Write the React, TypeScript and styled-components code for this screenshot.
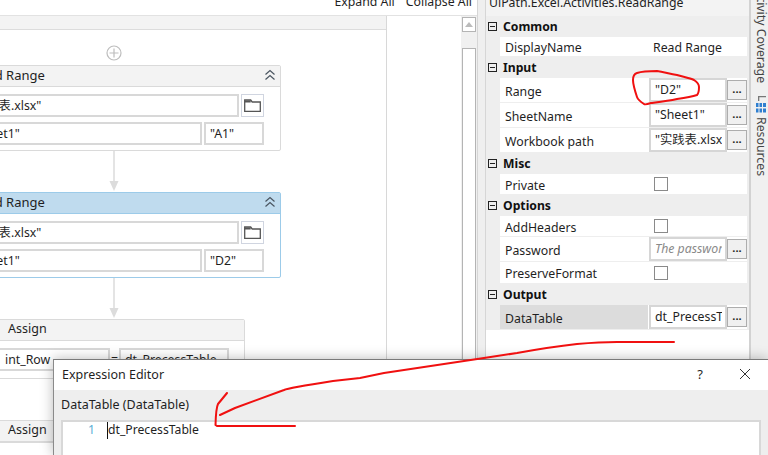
import React from "react";
import styled, { createGlobalStyle } from "styled-components";

const GlobalStyle = createGlobalStyle`
  html, body {
    margin: 0;
    padding: 0;
    background: #fff;
  }
  * {
    box-sizing: border-box;
  }
`;

type Prop = {
  name: string;
  kind: "plain" | "input" | "check";
  height: number;
  value?: string;
  hint?: boolean;
  selected?: boolean;
};

const GROUPS: Array<{ name: string; rows: Prop[] }> = [
  { name: "Common", rows: [{ name: "DisplayName", kind: "plain", height: 20, value: "Read Range" }] },
  {
    name: "Input",
    rows: [
      { name: "Range", kind: "input", height: 25, value: '"D2"' },
      { name: "SheetName", kind: "input", height: 25, value: '"Sheet1"' },
      { name: "Workbook path", kind: "input", height: 25, value: '"实践表.xlsx"' },
    ],
  },
  { name: "Misc", rows: [{ name: "Private", kind: "check", height: 21 }] },
  {
    name: "Options",
    rows: [
      { name: "AddHeaders", kind: "check", height: 21 },
      { name: "Password", kind: "input", height: 25, value: "The password", hint: true },
      { name: "PreserveFormat", kind: "check", height: 22 },
    ],
  },
  {
    name: "Output",
    rows: [{ name: "DataTable", kind: "input", height: 25, value: "dt_PrecessTable", selected: true }],
  },
];

const ReadRangeCard = ({ active, range }: { active?: boolean; range: string }) => (
  <Card $active={active} $width={334}>
    <CardHeader $active={active} $pad={24} $size={13}>
      <span>Read Range</span>
      <svg width="12" height="12" viewBox="0 0 12 12" fill="none" stroke="#4a5560" strokeWidth="1.2">
        <path d="M1.5 5.5 6 1.5l4.500 4M1.500 10.500 6 6.500l4.500 4" />
      </svg>
    </CardHeader>
    <CardBody>
      <FieldRow>
        <Field $grow $pad={14}>"实践表.xlsx"</Field>
        <FolderButton>
          <svg width="17" height="13" viewBox="0 0 17 13" fill="none" stroke="#555" strokeWidth="1.300">
            <path d="M.7 12.300V1h6l1.500 2h8.100v9.300z" />
            <path d="M.7 2.500h6" strokeWidth="2" />
          </svg>
        </FolderButton>
      </FieldRow>
      <FieldRow>
        <Field $grow $pad={15}>"Sheet1"</Field>
        <Field $width={60} $pad={4}>{range}</Field>
      </FieldRow>
    </CardBody>
  </Card>
);

const Connector = () => (
  <Arrow>
    <svg width="10" height="41" viewBox="0 0 10 41" fill="#e4e4e4">
      <rect x="4" y="0" width="2" height="32" />
      <path d="M0.500 30h9L5 40z" fill="#dcdcdc" />
    </svg>
  </Arrow>
);

const PropertyRow = ({ row }: { row: Prop }) => (
  <Row $height={row.height}>
    <RowLabel $selected={row.selected}>{row.name}</RowLabel>
    <RowValue>
      {row.kind === "plain" && <PlainValue>{row.value}</PlainValue>}
      {row.kind === "check" && <Check />}
      {row.kind === "input" && (
        <>
          <ValueInput $hint={row.hint}>
            <ValueText>{row.value}</ValueText>
          </ValueInput>
          <DotsButton>...</DotsButton>
        </>
      )}
    </RowValue>
  </Row>
);

export default function App() {
  return (
    <Page>
      <GlobalStyle />
      <Designer>
        <Toolbar>
          <ToolLink>Expand All</ToolLink>
          <ToolLink>Collapse All</ToolLink>
        </Toolbar>
        <DesignerBody>
          <CanvasPane>
            <Breadcrumb />
            <Canvas>
              <svg width="16" height="16" viewBox="0 0 16 16" fill="none" stroke="#bdbdbd" strokeWidth="1.200">
                <circle cx="8" cy="8" r="7" />
                <path d="M8 3.500v9M3.500 8h9" />
              </svg>
              <Gap />
              <ReadRangeCard range={'"A1"'} />
              <Connector />
              <ReadRangeCard active range={'"D2"'} />
              <Connector />
              <Card $width={262}>
                <CardHeader $pad={24} $size={12.5}>
                  <span>Assign</span>
                </CardHeader>
                <AssignRow>
                  <Field $width={125} $pad={18}>int_Row</Field>
                  <Equals>=</Equals>
                  <Field $width={110} $pad={4}>dt_PrecessTable</Field>
                </AssignRow>
              </Card>
              <SecondGap />
              <Card $width={262}>
                <CardHeader $pad={24} $size={12.5}>
                  <span>Assign</span>
                </CardHeader>
              </Card>
            </Canvas>
          </CanvasPane>
          <BlankPane />
          <ScrollBar>
            <ScrollUp>
              <svg width="8" height="5" viewBox="0 0 8 5" fill="#bbb">
                <path d="M4 0l4 5H0z" />
              </svg>
            </ScrollUp>
            <ScrollThumb />
          </ScrollBar>
        </DesignerBody>
      </Designer>
      <PaneGutter />
      <Properties>
        <PropTitle>UiPath.Excel.Activities.ReadRange</PropTitle>
        {GROUPS.map(group => (
          <div key={group.name}>
            <GroupHeader>
              <Toggle />
              <span>{group.name}</span>
            </GroupHeader>
            {group.rows.map(row => (
              <PropertyRow key={row.name} row={row} />
            ))}
          </div>
        ))}
        <PropFooter />
      </Properties>
      <SideTabs>
        <SideTab $clip>Activity Coverage</SideTab>
        <TabIcon>
          <svg width="10" height="17" viewBox="0 0 10 17">
            <path d="M2 0h8v1.300H3.300V5H2z" fill="#777" />
            <path d="M0 7h2.500v4H0zM3.500 7H6v4H3.500zM7 7h3v4H7zM0 12.500h2.500v4H0zM3.500 12.500H6v4H3.500zM7 12.500h3v4H7z" fill="#2f7fd0" />
          </svg>
        </TabIcon>
        <SideTab>Resources</SideTab>
      </SideTabs>

      <Dialog>
        <DialogTitle>
          <span>Expression Editor</span>
          <DialogActions>
            <HelpMark>?</HelpMark>
            <svg width="12" height="12" viewBox="0 0 12 12" stroke="#333" strokeWidth="1" fill="none">
              <path d="M1 1l10 10M11 1L1 11" />
            </svg>
          </DialogActions>
        </DialogTitle>
        <DialogBody>
          <EditorLabel>DataTable (DataTable)</EditorLabel>
          <Editor>
            <LineNumber>1</LineNumber>
            <Code>dt_PrecessTable</Code>
          </Editor>
        </DialogBody>
      </Dialog>

      <Ink width="768" height="455" viewBox="0 0 768 455" fill="none" stroke="#f01010" strokeWidth="2" strokeLinecap="round" strokeLinejoin="round">
        <path d="M651 103C648 104 645 105 644 104C641 102 638 100 637 97C635 91 633 85 633 80C633 76 634 74 637 73C643 71 650 71 657 71C664 72 670 74 677 75C684 77 690 78 694 80C697 82 699 85 699 87C699 91 699 93 697 95C691 97 684 98 677 99C668 101 659 102 651 103Z" />
        <path d="M220 415L235 408L284 390Q288 388 333 381L360 378L384 373L484 358L517 353Q550 347 577 344Q600 342 617 342L674 342" />
        <path d="M227 393L218 404Q216 408 215.500 425L217 426L295 426" />
      </Ink>
    </Page>
  );
}

const FONT = `"Noto Sans", "Noto Sans CJK SC", sans-serif`;

const Page = styled.div`
  position: relative;
  width: 768px;
  height: 455px;
  overflow: hidden;
  display: flex;
  background: #fff;
  color: #1f1f1f;
  font-family: ${FONT};
  font-size: 12.300px;
`;

const Designer = styled.div`
  width: 477px;
  flex: none;
  display: flex;
  flex-direction: column;
`;

const Toolbar = styled.div`
  height: 16px;
  flex: none;
  display: flex;
  justify-content: flex-end;
  align-items: flex-end;
  gap: 11px;
  padding: 0 5px 5px 0;
  border-bottom: 1px solid #e2e2e2;
  line-height: 16px;
`;

const ToolLink = styled.span`
  white-space: nowrap;
`;

const DesignerBody = styled.div`
  flex: 1;
  display: flex;
  min-height: 0;
`;

const CanvasPane = styled.div`
  width: 387px;
  flex: none;
  overflow: hidden;
  border-right: 1px solid #d8d8d8;
`;

const Breadcrumb = styled.div`
  height: 14px;
  background: #f3f3f3;
  border-bottom: 1px solid #dcdcdc;
`;

const Canvas = styled.div`
  width: 348px;
  margin-left: -60px;
  padding-top: 15px;
  display: flex;
  flex-direction: column;
  align-items: center;
`;

const Gap = styled.div`
  height: 4px;
  flex: none;
`;

const SecondGap = styled.div`
  height: 41px;
  flex: none;
`;

const Card = styled.div<{ $active?: boolean; $width: number }>`
  width: ${p => p.$width}px;
  flex: none;
  background: #fff;
  border: 1px solid ${p => (p.$active ? "#9ccbe9" : "#dadada")};
  border-radius: 2px;
`;

const CardHeader = styled.div<{ $active?: boolean; $pad: number; $size: number }>`
  height: 21px;
  display: flex;
  align-items: center;
  justify-content: space-between;
  padding: 0 4px 3px ${p => p.$pad}px;
  background: ${p => (p.$active ? "#bfdbee" : "#f3f3f3")};
  border-bottom: 1px solid ${p => (p.$active ? "#9ccbe9" : "#dadada")};
  font-size: ${p => p.$size}px;
`;

const CardBody = styled.div`
  padding: 7px 16px 5px 5px;
  display: flex;
  flex-direction: column;
  gap: 5px;
`;

const FieldRow = styled.div`
  display: flex;
  gap: 2px;
  height: 23px;
`;

const AssignRow = styled.div`
  display: flex;
  align-items: center;
  padding: 7px 0 7px 1px;
  height: 37px;
`;

const Field = styled.div<{ $grow?: boolean; $width?: number; $pad: number }>`
  ${p => (p.$grow ? "flex: 1;" : `width: ${p.$width}px; flex: none;`)}
  height: 23px;
  border: 2px solid #d8d8d8;
  background: #fff;
  padding-left: ${p => p.$pad}px;
  line-height: 19px;
  white-space: nowrap;
  overflow: hidden;
`;

const Equals = styled.span`
  width: 9px;
  text-align: center;
`;

const FolderButton = styled.div`
  width: 23px;
  flex: none;
  display: flex;
  align-items: center;
  justify-content: center;
  border: 1px solid #d0d5e0;
`;

const Arrow = styled.div`
  height: 41px;
  flex: none;
  display: flex;
`;

const BlankPane = styled.div`
  flex: 1;
`;

const ScrollBar = styled.div`
  width: 16px;
  flex: none;
  background: #f0f0f0;
  padding: 1px 1px 0;
`;

const ScrollUp = styled.div`
  height: 15px;
  background: #fff;
  border: 1px solid #b4b4b4;
  display: flex;
  align-items: center;
  justify-content: center;
`;

const ScrollThumb = styled.div`
  height: 420px;
  margin-top: 16px;
  background: #fff;
  border: 1px solid #b4b4b4;
`;

const PaneGutter = styled.div`
  width: 9px;
  flex: none;
  background: #efefef;
  border-left: 1px solid #d6d6d6;
  border-right: 1px solid #d6d6d6;
`;

const Properties = styled.div`
  width: 263px;
  flex: none;
  display: flex;
  flex-direction: column;
  background: #eeeeee;
`;

const PropTitle = styled.div`
  height: 16px;
  flex: none;
  display: flex;
  align-items: flex-end;
  padding: 0 0 5px 3px;
  background: #f3f3f3;
  line-height: 16px;
  white-space: nowrap;
`;

const GroupHeader = styled.div`
  height: 21px;
  display: flex;
  align-items: center;
  gap: 6px;
  padding-left: 2px;
  font-weight: 700;
  font-size: 12.200px;
  color: #111;
`;

const Toggle = styled.i`
  position: relative;
  width: 9px;
  height: 9px;
  border: 1px solid #222;
  &::after {
    content: "";
    position: absolute;
    left: 1px;
    right: 1px;
    top: 3px;
    height: 1px;
    background: #222;
  }
`;

const Row = styled.div<{ $height: number }>`
  height: ${p => p.$height}px;
  margin-left: 14px;
  margin-right: 2px;
  display: flex;
  background: #fff;
  border-bottom: 1px solid #eeeeee;
`;

const RowLabel = styled.div<{ $selected?: boolean }>`
  width: 148px;
  flex: none;
  display: flex;
  align-items: center;
  padding: 2px 0 0 5px;
  margin-right: 1px;
  background: ${p => (p.$selected ? "#dcdcdc" : "#fff")};
`;

const RowValue = styled.div`
  flex: 1;
  display: flex;
  align-items: center;
  min-width: 0;
  background: #fff;
`;

const PlainValue = styled.span`
  padding: 1px 0 0 4px;
`;

const Check = styled.i`
  width: 14px;
  height: 14px;
  margin-left: 5px;
  border: 1px solid #8a8a8a;
`;

const ValueInput = styled.div<{ $hint?: boolean }>`
  width: 78px;
  height: 24px;
  flex: none;
  border: 2px solid #d6d6d6;
  padding: 0 3px 0 4px;
  line-height: 19px;
  ${p => p.$hint && "color: #8a8a8a; font-style: italic;"}
`;

const ValueText = styled.div`
  overflow: hidden;
  white-space: nowrap;
`;

const DotsButton = styled.div`
  width: 20px;
  height: 20px;
  flex: none;
  background: #f0f0f0;
  border: 1px solid #adadad;
  text-align: center;
  font-weight: 700;
  font-size: 11px;
  line-height: 15px;
`;

const PropFooter = styled.div`
  flex: 1;
  background: #fff;
`;

const SideTabs = styled.div`
  flex: 1;
  display: flex;
  flex-direction: column;
  align-items: center;
  padding-left: 3px;
  background: #f0f0f0;
  border-left: 2px solid #d2d2d2;
  overflow: hidden;
  color: #444;
`;

const SideTab = styled.div<{ $clip?: boolean }>`
  writing-mode: vertical-rl;
  white-space: nowrap;
  flex: none;
  ${p => p.$clip && "margin-top: -16px;"}
`;

const TabIcon = styled.div`
  margin: 13px 0 4px;
  display: flex;
`;

const Dialog = styled.div`
  position: absolute;
  left: 53px;
  top: 359px;
  right: 0;
  bottom: 0;
  display: flex;
  flex-direction: column;
  background: #fff;
  border-top: 1px solid #7a7a7a;
  border-left: 1px solid #8a8a8a;
  box-shadow: 0 0 12px rgba(0, 0, 0, 0.28);
`;

const DialogTitle = styled.div`
  height: 30px;
  flex: none;
  display: flex;
  align-items: center;
  justify-content: space-between;
  padding: 0 17px 2px 8px;
  font-size: 12.500px;
`;

const DialogActions = styled.div`
  display: flex;
  align-items: center;
  gap: 36px;
`;

const HelpMark = styled.span`
  font-size: 13px;
`;

const DialogBody = styled.div`
  flex: 1;
  background: #eeeeee;
  padding: 6px 7px 0;
  display: flex;
  flex-direction: column;
`;

const EditorLabel = styled.div`
  height: 24px;
  flex: none;
  line-height: 18px;
  font-size: 12.500px;
`;

const Editor = styled.div`
  flex: 1;
  display: flex;
  background: #fff;
  border: 2px solid #d8d8d8;
  border-bottom: none;
  line-height: 15px;
  font-size: 12.200px;
`;

const LineNumber = styled.span`
  width: 44px;
  flex: none;
  text-align: right;
  padding-right: 12px;
  color: #59aed6;
`;

const Code = styled.span`
  border-left: 1px solid #111;
  height: 17px;
`;

const Ink = styled.svg`
  position: absolute;
  inset: 0;
  pointer-events: none;
`;
